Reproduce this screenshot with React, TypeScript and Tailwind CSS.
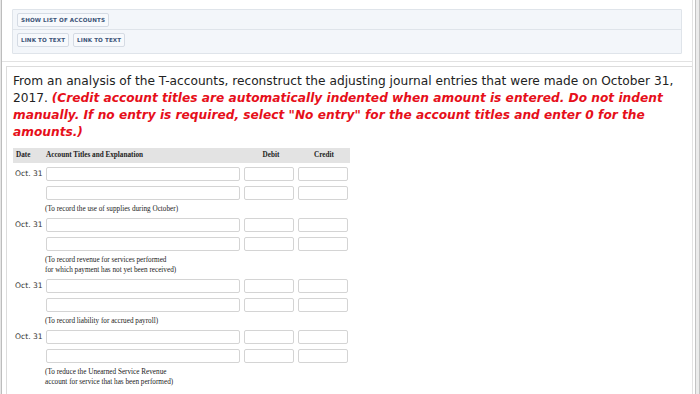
const entries = [
  { note: ["(To record the use of supplies during October)"] },
  { note: ["(To record revenue for services performed", "for which payment has not yet been received)"] },
  { note: ["(To record liability for accrued payroll)"] },
  { note: ["(To reduce the Unearned Service Revenue", "account for service that has been performed)"] },
];

const Field = ({ w }: { w: string }) => (
  <div className={`h-[14px] ${w} rounded-[2px] border border-[#d4d4d4] bg-white`} />
);

const LineRow = ({ date }: { date?: string }) => (
  <div className="flex items-center">
    <div className="w-[33px] pl-[2px] font-['DejaVu_Sans',sans-serif] text-[7.6px] text-[#333]">{date}</div>
    <div className="flex gap-[4px]">
      <Field w="w-[194px]" />
      <Field w="w-[50px]" />
      <Field w="w-[50px]" />
    </div>
  </div>
);

const TagButton = ({ label }: { label: string }) => (
  <span className="rounded-[2px] border border-[#d5dbe4] bg-[#f7f9fc] px-[3px] py-[2px] font-['DejaVu_Sans',sans-serif] text-[5.6px] font-bold leading-[8px] tracking-[0.1px] text-[#3c5478]">
    {label}
  </span>
);

export default function App() {
  return (
    <div className="flex h-[394px] w-[700px] overflow-hidden bg-white">
      <div className="w-[4px] border-r border-[#bdbdbd] bg-[#e6e6e6]" />
      <div className="flex flex-1 flex-col">
        <div className="border-b border-[#e2e2e2] px-[10px] pb-[7px] pt-[9px]">
          <div className="w-[670px] rounded-[1px] border border-[#dfe4ea] bg-[#f3f6fa]">
            <div className="flex h-[20px] items-center border-b border-[#dfe4ea] px-[4px]">
              <TagButton label="SHOW LIST OF ACCOUNTS" />
            </div>
            <div className="flex h-[23px] items-start gap-[4px] px-[4px] pt-[3px]">
              <TagButton label="LINK TO TEXT" />
              <TagButton label="LINK TO TEXT" />
            </div>
          </div>
        </div>
        <div className="ml-[4px] mt-[4px] flex-1 border-l border-t border-[#dcdcdc] px-[6px] pt-[6px]">
          <p className="w-[662px] font-['DejaVu_Sans',sans-serif] text-[12.2px] leading-[17px] text-[#222]">
            From an analysis of the T-accounts, reconstruct the adjusting journal entries that were made on October 31,
            2017.{" "}
            <span className="font-bold italic text-[#e60f1a]">
              (Credit account titles are automatically indented when amount is entered. Do not indent manually. If no
              entry is required, select "No entry" for the account titles and enter 0 for the amounts.)
            </span>
          </p>
          <div className="mt-[7px] w-[337px]">
            <div className="flex h-[15px] items-center bg-[#e3e3e3] font-['Liberation_Serif',serif] text-[7.2px] font-bold text-[#222]">
              <span className="w-[33px] pl-[3px]">Date</span>
              <span className="w-[198px]">Account Titles and Explanation</span>
              <span className="w-[54px] text-center">Debit</span>
              <span className="w-[52px] text-center">Credit</span>
            </div>
            <div className="mt-[4px] flex flex-col">
              {entries.map((e, i) => (
                <div key={i} className="mb-[4px] flex flex-col">
                  <LineRow date="Oct. 31" />
                  <div className="mt-[5px]">
                    <LineRow />
                  </div>
                  <div className="mt-[4px] pl-[32px] font-['Liberation_Serif',serif] text-[7.2px] leading-[10px] text-[#222]">
                    {e.note.map((n) => (
                      <div key={n}>{n}</div>
                    ))}
                  </div>
                </div>
              ))}
            </div>
          </div>
        </div>
      </div>
      <div className="flex w-[10px] border-l border-[#e2e2e2]">
        <div className="ml-[2px] w-[5px] border-x border-[#c4c4c4] bg-[#ececec]" />
      </div>
    </div>
  );
}
